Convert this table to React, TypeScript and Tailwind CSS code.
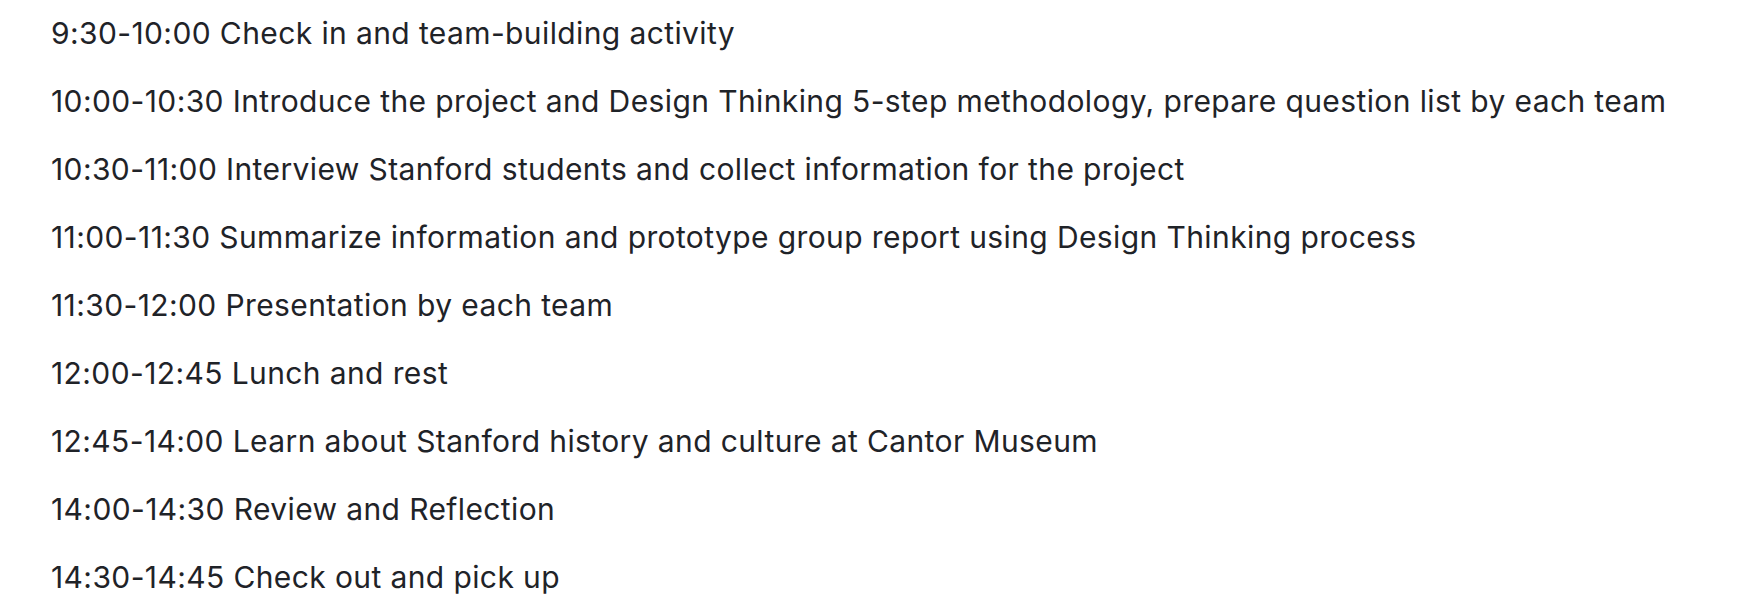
const items = [
  "9:30-10:00 Check in and team-building activity",
  "10:00-10:30 Introduce the project and Design Thinking 5-step methodology, prepare question list by each team",
  "10:30-11:00 Interview Stanford students and collect information for the project",
  "11:00-11:30 Summarize information and prototype group report using Design Thinking process",
  "11:30-12:00 Presentation by each team",
  "12:00-12:45 Lunch and rest",
  "12:45-14:00 Learn about Stanford history and culture at Cantor Museum",
  "14:00-14:30 Review and Reflection",
  "14:30-14:45 Check out and pick up",
];

export default function App() {
  return (
    <div className="min-h-screen bg-white pl-[51px] pt-[13px] font-['Inter',sans-serif] text-[30px] leading-[40px] tracking-[0.39px] text-[#1f2328]">
      {items.map((t) => (
        <p key={t} className="mb-[28px] whitespace-nowrap">
          {t}
        </p>
      ))}
    </div>
  );
}
